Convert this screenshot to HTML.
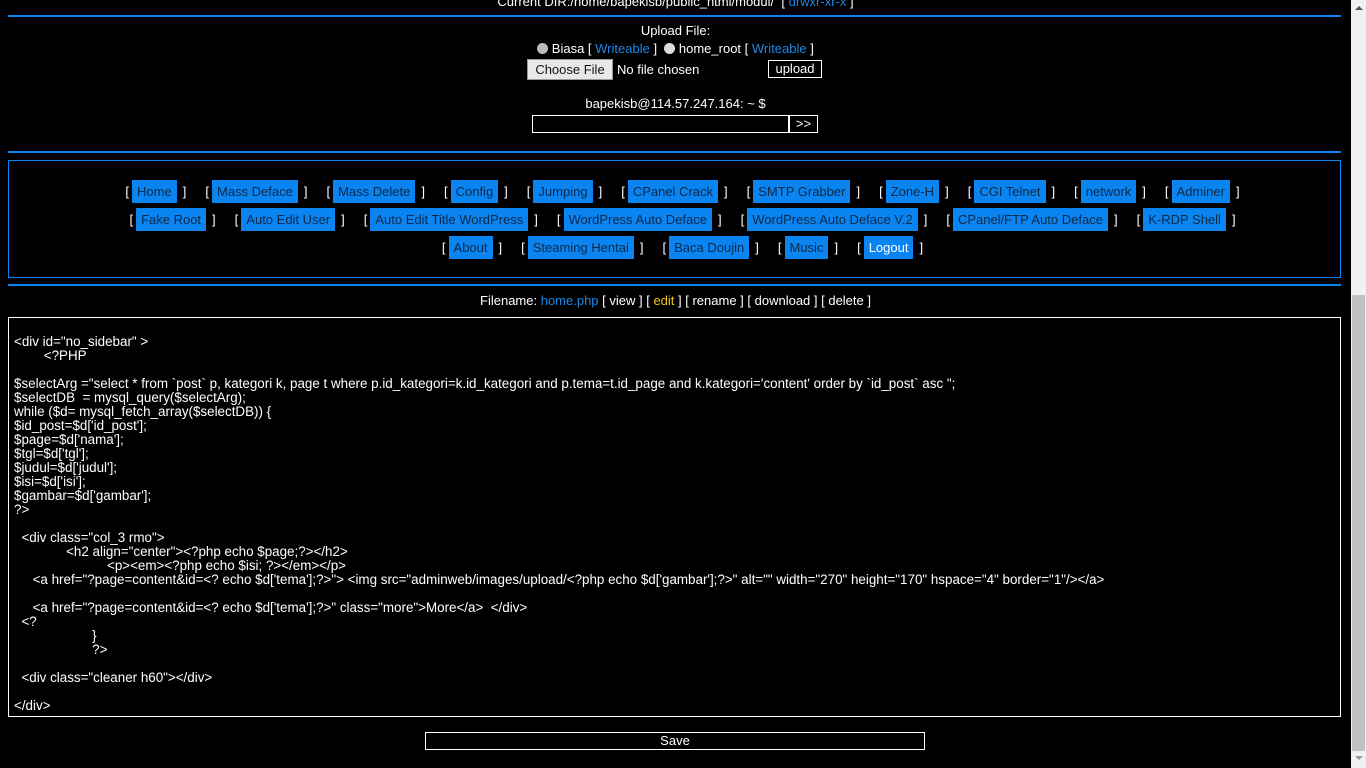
<!DOCTYPE html>
<html><head><meta charset="utf-8"><style>
html,body{margin:0;padding:0;background:#000;overflow:hidden;width:1366px;height:768px}
body{font-family:"Liberation Sans",sans-serif;font-size:13px;color:#fff;position:relative}
.abs{position:absolute}
.c{text-align:center;left:0;width:1351px}
.hl{position:absolute;left:8px;width:1333px;height:2px;background:#0a84f0}
a{color:#1e88e5;text-decoration:none}
.menu{position:absolute;left:8px;top:160px;width:1331px;height:116px;border:1px solid #0a84f0}
.row{position:absolute;left:0;width:1347px;display:flex;justify-content:center;gap:19px;height:23px;align-items:center}
.it{display:flex;align-items:center;color:#fff}
.it span{background:#0a84f0;color:#0b2a4a;padding:0 5px;height:23px;line-height:23px;margin:0 6px 0 3px}
.it span.w{color:#fff}
pre{margin:0;font-family:"Liberation Sans",sans-serif;font-size:13.4px;line-height:14px;color:#fff}
.sb{position:absolute;left:1351px;top:0;width:15px;height:768px;background:#f1f1f1}
</style></head><body>
<div class="abs c" style="top:-6px">Current DIR:/home/bapekisb/public_html/modul/ &nbsp;[ <a>drwxr-xr-x</a> ]</div>
<div class="hl" style="top:15px"></div>
<div class="abs c" style="top:23px">Upload File:</div>
<div class="abs c" style="top:41px"><span style="display:inline-block;width:11px;height:11px;border-radius:50%;background:#bbb;vertical-align:-1px"></span> Biasa [ <a>Writeable</a> ] &nbsp;<span style="display:inline-block;width:11px;height:11px;border-radius:50%;background:#ddd;vertical-align:-1px"></span> home_root [ <a>Writeable</a> ]</div>
<div class="abs" style="left:527px;top:59px;width:84px;height:19px;background:#e8e8e8;border:1px solid #999;color:#111;text-align:center;line-height:19px;font-size:13px">Choose File</div>
<div class="abs" style="left:617px;top:62px;font-size:13px">No file chosen</div>
<div class="abs" style="left:768px;top:60px;width:52px;height:16px;border:1px solid #fff;text-align:center;line-height:16px;font-size:13px">upload</div>
<div class="abs c" style="top:96px">bapekisb@114.57.247.164: ~ $</div>
<div class="abs" style="left:532px;top:115px;width:255px;height:16px;border:1px solid #fff"></div>
<div class="abs" style="left:789px;top:115px;width:27px;height:16px;border:1px solid #fff;text-align:center;line-height:16px">&gt;&gt;</div>
<div class="hl" style="top:151px"></div>
<div class="menu">
<div class="row" style="top:19px"><div class="it">[<span>Home</span>]</div><div class="it">[<span>Mass Deface</span>]</div><div class="it">[<span>Mass Delete</span>]</div><div class="it">[<span>Config</span>]</div><div class="it">[<span>Jumping</span>]</div><div class="it">[<span>CPanel Crack</span>]</div><div class="it">[<span>SMTP Grabber</span>]</div><div class="it">[<span>Zone-H</span>]</div><div class="it">[<span>CGI Telnet</span>]</div><div class="it">[<span>network</span>]</div><div class="it">[<span>Adminer</span>]</div></div>
<div class="row" style="top:47px"><div class="it">[<span>Fake Root</span>]</div><div class="it">[<span>Auto Edit User</span>]</div><div class="it">[<span>Auto Edit Title WordPress</span>]</div><div class="it">[<span>WordPress Auto Deface</span>]</div><div class="it">[<span>WordPress Auto Deface V.2</span>]</div><div class="it">[<span>CPanel/FTP Auto Deface</span>]</div><div class="it">[<span>K-RDP Shell</span>]</div></div>
<div class="row" style="top:75px"><div class="it">[<span>About</span>]</div><div class="it">[<span>Steaming Hentai</span>]</div><div class="it">[<span>Baca Doujin</span>]</div><div class="it">[<span>Music</span>]</div><div class="it">[<span class="w">Logout</span>]</div></div>
</div>
<div class="hl" style="top:284px"></div>
<div class="abs c" style="top:293px">Filename: <a>home.php</a> [ view ] [ <b style="color:#f5c518;font-weight:normal">edit</b> ] [ rename ] [ download ] [ delete ]</div>
<div class="abs" style="left:8px;top:317px;width:1331px;height:398px;border:1px solid #fff">
<pre style="position:absolute;left:5px;top:17px">&lt;div id="no_sidebar" &gt;
        &lt;?PHP

$selectArg ="select * from `post` p, kategori k, page t where p.id_kategori=k.id_kategori and p.tema=t.id_page and k.kategori='content' order by `id_post` asc ";
$selectDB  = mysql_query($selectArg);
while ($d= mysql_fetch_array($selectDB)) {
$id_post=$d['id_post'];
$page=$d['nama'];
$tgl=$d['tgl'];
$judul=$d['judul'];
$isi=$d['isi'];
$gambar=$d['gambar'];
?&gt;

  &lt;div class="col_3 rmo"&gt;
              &lt;h2 align="center"&gt;&lt;?php echo $page;?&gt;&lt;/h2&gt;
                         &lt;p&gt;&lt;em&gt;&lt;?php echo $isi; ?&gt;&lt;/em&gt;&lt;/p&gt;
     &lt;a href="?page=content&amp;id=&lt;? echo $d['tema'];?&gt;"&gt; &lt;img src="adminweb/images/upload/&lt;?php echo $d['gambar'];?&gt;" alt="" width="270" height="170" hspace="4" border="1"/&gt;&lt;/a&gt;

     &lt;a href="?page=content&amp;id=&lt;? echo $d['tema'];?&gt;" class="more"&gt;More&lt;/a&gt;  &lt;/div&gt;
  &lt;?
                     }
                     ?&gt;

  &lt;div class="cleaner h60"&gt;&lt;/div&gt;

&lt;/div&gt;</pre></div>
<div class="abs" style="left:425px;top:732px;width:498px;height:16px;border:1px solid #fff;text-align:center;line-height:16px">Save</div>
<div class="sb"><div class="abs" style="left:4px;top:6px;width:0;height:0;border-left:4px solid transparent;border-right:4px solid transparent;border-bottom:4px solid #555"></div>
<div class="abs" style="left:1px;top:295px;width:13px;height:456px;background:#c1c1c1"></div>
<div class="abs" style="left:4px;top:756px;width:0;height:0;border-left:4px solid transparent;border-right:4px solid transparent;border-top:4px solid #999"></div></div>
</body></html>
